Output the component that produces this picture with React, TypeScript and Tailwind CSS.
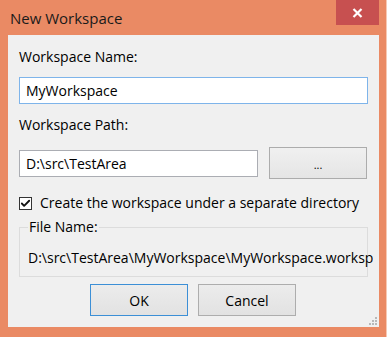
import { Check } from 'lucide-react'

const font = { fontFamily: '"Open Sans", "Noto Sans", sans-serif' }

const NewWorkspaceDialog = () => {
  return (
    <div
      className="w-[387px] h-[337px] bg-[#ea8a64] flex flex-col border-r border-r-[#f6c9b4] text-[#000]"
      style={font}
    >
      {/* title bar */}
      <div className="h-[35px] flex items-start shrink-0">
        <div className="pl-[10px] pt-[7px] text-[15px] leading-[22px] text-[#1a1a1a]">New Workspace</div>
        <div className="ml-auto mr-[7px] w-[43px] h-[25px] bg-[#c75050] flex items-center justify-center">
          <svg width="11" height="10" viewBox="0 0 11 10">
            <path d="M1.5 1 L9.5 9 M9.5 1 L1.5 9" stroke="#fff" strokeWidth="2.2" />
          </svg>
        </div>
      </div>

      {/* client area */}
      <div className="mx-[8px] w-[371px] h-[292px] bg-[#f0f0f0] px-[11px] pt-[12px] text-[14px] relative">
        <div className="h-[20px] leading-[20px]">Workspace Name:</div>
        <div className="mt-[10px] h-[27px] border border-[#7eb4ea] bg-white px-[6px] leading-[25px]">MyWorkspace</div>

        <div className="mt-[11px] h-[20px] leading-[20px]">Workspace Path:</div>
        <div className="mt-[12px] h-[32px] flex items-center">
          <div className="w-[239px] h-[27px] border border-[#abadb3] bg-white px-[6px] leading-[25px]">D:\src\TestArea</div>
          <div className="ml-[11px] w-[98px] h-[32px] border border-[#acacac] bg-gradient-to-b from-[#f0f0f0] to-[#e5e5e5] flex items-center justify-center text-[11px] pt-[4px]">
            ...
          </div>
        </div>

        <div className="mt-[14px] h-[20px] flex items-center">
          <div className="w-[13px] h-[13px] border border-[#333] bg-white flex items-center justify-center">
            <Check size={11} strokeWidth={4} color="#111" />
          </div>
          <span className="ml-[8px] leading-[20px]">Create the workspace under a separate directory</span>
        </div>

        <div className="mt-[14px] h-[50px] border border-[#dcdcdc] relative">
          <div className="absolute left-[8px] top-[-11px] bg-[#f0f0f0] px-[1px] leading-[20px]">File Name:</div>
          <div className="pl-[8px] pt-[20px] leading-[20px] whitespace-nowrap overflow-hidden w-[353px]">
            D:\src\TestArea\MyWorkspace\MyWorkspace.workspace
          </div>
        </div>

        <div className="mt-[7px] flex gap-[10px] pl-[71px]">
          <div className="w-[98px] h-[32px] border border-[#3c8fd6] bg-gradient-to-b from-[#ececec] to-[#e2e2e2] flex items-center justify-center">
            OK
          </div>
          <div className="w-[98px] h-[32px] border border-[#adadad] bg-gradient-to-b from-[#ececec] to-[#e2e2e2] flex items-center justify-center">
            Cancel
          </div>
        </div>

        {/* size grip */}
        <svg className="absolute right-[2px] bottom-[2px]" width="9" height="9" viewBox="0 0 9 9">
          {[
            [7, 1],
            [4, 4],
            [7, 4],
            [1, 7],
            [4, 7],
            [7, 7],
          ].map(([x, y]) => (
            <rect key={`${x}-${y}`} x={x} y={y} width="2" height="2" fill="#b8b8b8" />
          ))}
        </svg>
      </div>
    </div>
  )
}

export default function App() {
  return <NewWorkspaceDialog />
}
